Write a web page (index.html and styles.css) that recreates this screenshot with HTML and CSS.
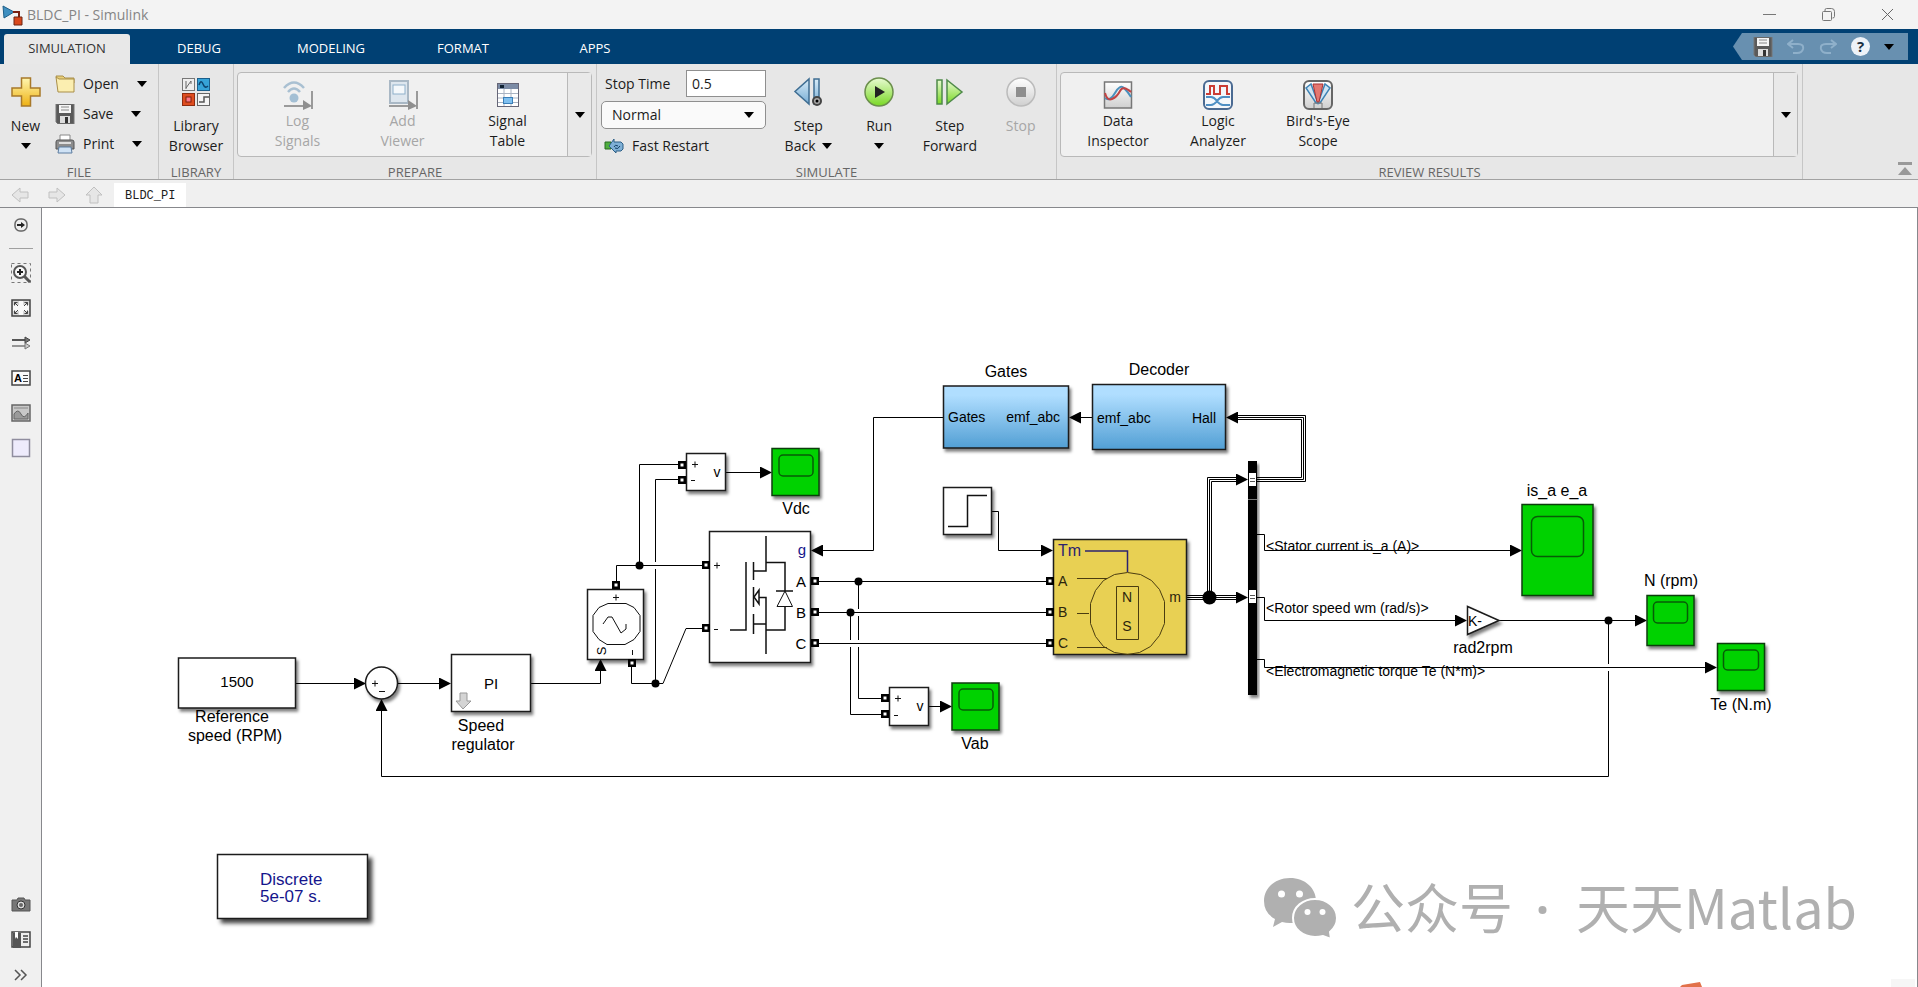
FILE: index.html
```html
<!DOCTYPE html>
<html lang="en">
<head>
<meta charset="utf-8">
<title>BLDC_PI - Simulink</title>
<link rel="stylesheet" href="styles.css">
</head>
<body>
<svg class="defs" aria-hidden="true">
  <defs>
    <linearGradient id="gold" x1="0" y1="0" x2="0" y2="1"><stop offset="0" stop-color="#fff6b0"/><stop offset="1" stop-color="#eeb112"/></linearGradient>
    <linearGradient id="green" x1="0" y1="0" x2="0" y2="1"><stop offset="0" stop-color="#e8fbd2"/><stop offset="1" stop-color="#79d824"/></linearGradient>
    <linearGradient id="blue" x1="0" y1="0" x2="0" y2="1"><stop offset="0" stop-color="#d8ecf8"/><stop offset="1" stop-color="#76acd4"/></linearGradient>
    <linearGradient id="silver" x1="0" y1="0" x2="0" y2="1"><stop offset="0" stop-color="#ffffff"/><stop offset="1" stop-color="#cfcfcf"/></linearGradient>
    <linearGradient id="sub" x1="0" y1="0" x2="0" y2="1"><stop offset="0.15" stop-color="#b0deff"/><stop offset="1" stop-color="#529fd4"/></linearGradient>
    <filter id="shadow" x="-20%" y="-20%" width="150%" height="150%"><feDropShadow dx="2" dy="3" stdDeviation="1.5" flood-opacity="0.5"/></filter>
    <filter id="deep" x="-20%" y="-20%" width="150%" height="150%"><feDropShadow dx="4" dy="4" stdDeviation="2" flood-opacity="0.75"/></filter>
    <marker id="arrow" viewBox="0 0 12 12" refX="0" refY="6" markerWidth="12" markerHeight="12" markerUnits="userSpaceOnUse" orient="auto"><path d="M0 0L12 6L0 12z"/></marker>
    <symbol id="port" viewBox="0 0 8 8"><path d="M0 0h8v8H0z"/><path d="M2.500 2.500h3v3h-3z" fill="#fff"/></symbol>
    <symbol id="caret" viewBox="0 0 10 6"><path d="M0 0h10L5 6z"/></symbol>
    <symbol id="disk" viewBox="0 0 20 20"><path d="M1 0h18v20H3l-2-2z" fill="#5a5a5a" stroke="#777"/><path d="M4 1h12v8H4z" fill="#f5f5f5"/><path d="M6 3h8M6 6h8" stroke="#888"/><path d="M5 12h10v7H5z" fill="#ddd"/><path d="M10 13h3v6h-3z" fill="#333"/></symbol>
  </defs>
</svg>

<header class="titlebar">
  <svg class="app-icon" width="22" height="22" viewBox="0 0 22 22"><path d="M1 2l11 6-10 6z" fill="#3f8fc0" stroke="#1f5f88"/><path d="M11 8h6v5" fill="none" stroke="#7a2010" stroke-width="2"/><path d="M12 13h8v8h-8z" fill="#d9481c" stroke="#6d2412"/></svg>
  <h1 class="title">BLDC_PI - Simulink</h1>
  <div class="window-buttons">
    <button aria-label="Minimize"><svg width="13" height="13"><path d="M0 6.500h13" stroke="#777"/></svg></button>
    <button aria-label="Restore"><svg width="13" height="13" fill="none" stroke="#777"><rect x="0.500" y="3.500" width="9" height="9" rx="1"/><path d="M3 3V2q0-1.500 1.500-1.500h5q3 0 3 3v5q0 1.500-2 1.500"/></svg></button>
    <button aria-label="Close"><svg width="13" height="13" stroke="#666"><path d="M1 1l11 11M12 1L1 12"/></svg></button>
  </div>
</header>

<nav class="tabs">
  <button class="tab active">SIMULATION</button>
  <button class="tab">DEBUG</button>
  <button class="tab">MODELING</button>
  <button class="tab">FORMAT</button>
  <button class="tab">APPS</button>
  <div class="quick">
    <button aria-label="Save model"><svg width="20" height="20"><use href="#disk"/></svg></button>
    <button aria-label="Undo"><svg width="18" height="16" fill="none" stroke="#8fb0ca" stroke-width="2"><path d="M6 1L1 5l5 4M1 5h10q6 0 5 5-1 4-6 4H6"/></svg></button>
    <button aria-label="Redo"><svg width="18" height="16" fill="none" stroke="#8fb0ca" stroke-width="2"><path d="M12 1l5 4-5 4M17 5H7q-6 0-5 5 1 4 6 4h4"/></svg></button>
    <button aria-label="Help" class="help">?</button>
    <button aria-label="More"><svg width="10" height="6"><use href="#caret"/></svg></button>
  </div>
</nav>

<div class="ribbon">
  <section class="group file">
    <div class="body">
      <button class="big"><svg class="i30" viewBox="0 0 30 30"><path d="M10.500 1h9v10H29v8h-9.500v10h-9V19H1v-8h9.500z" fill="url(#gold)" stroke="#a8792a" stroke-width="1.500"/></svg><span>New</span><svg class="caret" width="10" height="6"><use href="#caret"/></svg></button>
      <div class="stack">
        <button class="small"><svg width="20" height="20" viewBox="0 0 20 20"><path d="M1 2h7l2 2h9v5H3z" fill="#e9cf78" stroke="#a98f4a"/><path d="M4 5h15v13H3L1 3z" fill="#fbeeb0" stroke="#a98f4a"/></svg><span>Open</span><svg width="10" height="6"><use href="#caret"/></svg></button>
        <button class="small"><svg width="20" height="20"><use href="#disk"/></svg><span>Save</span><svg width="10" height="6"><use href="#caret"/></svg></button>
        <button class="small"><svg width="20" height="20" viewBox="0 0 20 20"><path d="M5 1h10v8H5z" fill="#fff" stroke="#888"/><path d="M1 8q0-2 2-2h14q2 0 2 2v7H1z" fill="#8d8d8d" stroke="#555"/><path d="M4 8h12v2H4z" fill="#ddd"/><path d="M4 13h12l1 6H3z" fill="#cfe2f5" stroke="#5d7da0"/></svg><span>Print</span><svg width="10" height="6"><use href="#caret"/></svg></button>
      </div>
    </div>
    <h2>FILE</h2>
  </section>
  <section class="group library">
    <div class="body">
      <button class="big"><svg class="i30" viewBox="0 0 30 30"><rect x="1.500" y="1.500" width="12" height="12" fill="#eee" stroke="#777"/><path d="M5 4v8M5 11l5-7M10 4v3" fill="none" stroke="#666"/><rect x="16.500" y="1.500" width="12" height="12" fill="#36a3d8" stroke="#1b5f8c"/><path d="M18 8q2-6 4-1t5 2" fill="none" stroke="#0d4570" stroke-width="1.500"/><rect x="1.500" y="16.500" width="12" height="12" fill="#df4d20" stroke="#8d2c10"/><rect x="5" y="20" width="5" height="5" fill="#f78" stroke="#7b200c"/><rect x="16.500" y="16.500" width="12" height="12" fill="#f4f4f4" stroke="#666"/><path d="M18 25h5v-5h5" fill="none" stroke="#555" stroke-width="1.500"/></svg><span>Library<br>Browser</span></button>
    </div>
    <h2>LIBRARY</h2>
  </section>
  <section class="group prepare">
    <div class="body">
      <div class="gallery">
        <button class="item" disabled><svg class="i30" viewBox="0 0 30 30" fill="none"><path d="M1 8Q11-3 21 8M5 12q6-7 12 0" stroke="#a9c0d2" stroke-width="2.500"/><circle cx="11" cy="18" r="4.500" fill="#a3bfd4"/><path d="M1 26h20M29 11v18" stroke="#9a9a9a" stroke-width="2"/><path d="M20 20l9 6-9 4z" fill="#8f8f8f"/></svg><span>Log<br>Signals</span></button>
        <button class="item" disabled><svg class="i30" viewBox="0 0 30 30" fill="none"><rect x="2" y="1" width="18" height="22" fill="#dde6ee" stroke="#a9b8c5" stroke-width="2"/><rect x="5" y="5" width="12" height="9" fill="#f4f8fb" stroke="#8fb0ca"/><path d="M1 26h20M29 11v18" stroke="#9a9a9a" stroke-width="2"/><path d="M20 20l9 6-9 4z" fill="#8f8f8f"/></svg><span>Add<br>Viewer</span></button>
        <button class="item"><svg class="i30" viewBox="0 0 30 30"><rect x="4.500" y="3.500" width="21" height="23" fill="#fff" stroke="#667"/><path d="M5 4h20v5H5z" fill="#7c8ca6"/><path d="M7 5h4v3H7z" fill="#123"/><path d="M5 13.500h20M5 18h20M5 22.500h20M11 9v17M18 9v17" stroke="#a9b3c2"/><rect x="10.500" y="17.500" width="9" height="6" fill="#7fc0f0" stroke="#3b7fb8"/></svg><span>Signal<br>Table</span></button>
        <button class="more" aria-label="More tools"><svg width="10" height="6"><use href="#caret"/></svg></button>
      </div>
    </div>
    <h2>PREPARE</h2>
  </section>
  <section class="group simulate">
    <div class="body">
      <div class="settings">
        <div class="stop"><label for="stop">Stop Time</label><input id="stop" type="text" value="0.5"></div>
        <div class="mode"><select aria-label="Simulation mode"><option>Normal</option></select><svg class="mode-caret" width="10" height="6"><use href="#caret"/></svg></div>
        <button class="fast"><svg width="20" height="16" viewBox="0 0 20 16"><path d="M1 4h6v7H1z" fill="#4fae3e" stroke="#276a22"/><path d="M5 8l5-7v3h7l2 2v5l-2 2h-5v2z" fill="#7fb0d6" stroke="#2d5f86"/><path d="M10 9q1-3 4-1M11 10q3 2 5-2" fill="none" stroke="#123f63"/></svg><span>Fast Restart</span></button>
      </div>
      <button class="big run"><svg class="i30" viewBox="0 0 30 30"><path d="M16 2v25L2 14.500z" fill="url(#blue)" stroke="#3f6e93" stroke-width="1.500"/><path d="M21 2h5v25h-5z" fill="url(#blue)" stroke="#3f6e93" stroke-width="1.500"/><circle cx="24" cy="24" r="4" fill="#aaa" stroke="#444" stroke-width="2"/><circle cx="24" cy="24" r="1.500"/></svg><span>Step<br>Back <svg class="inline-caret" width="10" height="6"><use href="#caret"/></svg></span></button>
      <button class="big run"><svg class="i30" viewBox="0 0 30 30"><circle cx="15" cy="15" r="14" fill="url(#green)" stroke="#6b8f4c" stroke-width="1.500"/><path d="M11 9l10 6-10 6z" fill="#222"/></svg><span>Run</span><svg class="caret" width="10" height="6"><use href="#caret"/></svg></button>
      <button class="big run"><svg class="i30" viewBox="0 0 30 30" fill="url(#green)" stroke="#4f8a4a" stroke-width="1.500"><path d="M2 3h5v24H2zM12 3v24l15-12z"/></svg><span>Step<br>Forward</span></button>
      <button class="big run" disabled><svg class="i30" viewBox="0 0 30 30"><circle cx="15" cy="15" r="14" fill="url(#silver)" stroke="#bbb" stroke-width="1.500"/><path d="M10 10h10v10H10z" fill="#8e8e8e"/></svg><span>Stop</span></button>
    </div>
    <h2>SIMULATE</h2>
  </section>
  <section class="group review">
    <div class="body">
      <div class="gallery">
        <button class="item"><svg class="i30" viewBox="0 0 30 30" fill="none"><rect x="1.500" y="2" width="27" height="26" fill="url(#silver)" stroke="#777" stroke-width="1.500"/><path d="M2 18q5 4 10-5t9-5 7 9" stroke="#4a90bd" stroke-width="2"/><path d="M2 13q2 8 7 6t8-8 11 1" stroke="#c24444" stroke-width="2"/></svg><span>Data<br>Inspector</span></button>
        <button class="item"><svg class="i30" viewBox="0 0 30 30" fill="none"><rect x="1" y="1" width="28" height="28" rx="5" fill="#f4f7fb" stroke="#4a6a92" stroke-width="2"/><path d="M3 14h4V6h4v8h6V6h7v8h3" stroke="#cb3d35" stroke-width="2"/><path d="M3 17h5q3 0 6 4t6 4h7M3 25h5q3 0 6-4t6-4h7" stroke="#4e8fc4" stroke-width="2"/></svg><span>Logic<br>Analyzer</span></button>
        <button class="item"><svg class="i30" viewBox="0 0 30 30"><rect x="1" y="1" width="28" height="28" rx="5" fill="url(#silver)" stroke="#666" stroke-width="2"/><path d="M3 8l5-4 7 19 7-19 5 4-10 15h-4z" fill="#cfe4f3" stroke="#3d82b4" stroke-width="1.500"/><path d="M10 4h10l-4 18h-2z" fill="#e47770" stroke="#a33"/><path d="M11 28v-5h8v5" fill="none" stroke="#777"/></svg><span>Bird's-Eye<br>Scope</span></button>
        <button class="more" aria-label="More results"><svg width="10" height="6"><use href="#caret"/></svg></button>
      </div>
    </div>
    <h2>REVIEW RESULTS</h2>
  </section>
  <button class="collapse" aria-label="Collapse toolstrip"><svg width="14" height="14" fill="#999"><path d="M0 0h14v3H0zM7 5l7 8H0z"/></svg></button>
</div>

<div class="pathbar">
  <button aria-label="Back"><svg width="18" height="16" fill="#e6e6e6" stroke="#c0c0c0"><path d="M1 8l8-7v4h8v6H9v4z"/></svg></button>
  <button aria-label="Forward"><svg width="18" height="16" fill="#e6e6e6" stroke="#c0c0c0"><path d="M17 8L9 1v4H1v6h8v4z"/></svg></button>
  <button aria-label="Up"><svg width="18" height="18" fill="#e6e6e6" stroke="#c0c0c0"><path d="M9 1l8 8h-4v8H5V9H1z"/></svg></button>
  <button class="model-tab">BLDC_PI</button>
</div>

<main class="editor">
  <aside class="palette">
    <button aria-label="Hide browser"><svg width="20" height="20"><rect x="4" y="4" width="12" height="12" rx="5" fill="#eee" stroke="#666" stroke-width="1.500"/><path d="M6 9h4V7l4 3-4 3v-2H6z" fill="#222"/></svg></button>
    <hr>
    <button aria-label="Zoom"><svg width="20" height="20" fill="none"><rect x="0.500" y="0.500" width="19" height="19" stroke="#777" stroke-dasharray="3 3"/><circle cx="9" cy="9" r="6" fill="#f8f8f8" stroke="#555" stroke-width="2"/><path d="M9 6v6M6 9h6" stroke="#222" stroke-width="2"/><path d="M13 13l6 6" stroke="#555" stroke-width="3"/></svg></button>
    <button aria-label="Fit to view"><svg width="20" height="20" fill="none" stroke="#444"><rect x="1" y="2" width="18" height="16" fill="#d8d8d8" stroke-width="1.500"/><path d="M8 3h4v4h6v6h-6v4H8v-4H2V7h6z" fill="#fafafa" stroke="none"/><path d="M7 8L3.500 4.500M3.500 7.500v-3h3M13 8l3.500-3.500M13.500 4.500h3v3M7 12l-3.500 3.500M3.500 12.500v3h3M13 12l3.500 3.500M16.500 12.500v3h-3"/></svg></button>
    <button aria-label="Sample time"><svg width="20" height="20" fill="none"><path d="M1 7h16" stroke="#222" stroke-width="1.500"/><path d="M14 4l5 3-5 3z" fill="#777" stroke="#444"/><path d="M1 13h16" stroke="#777" stroke-width="1.500"/><path d="M14 10l5 3-5 3z" fill="#ccc" stroke="#777"/></svg></button>
    <button aria-label="Annotation"><svg width="20" height="20"><rect x="1" y="3" width="18" height="14" fill="#fafafa" stroke="#444" stroke-width="1.500"/><text class="glyph" x="3" y="14">A</text><path d="M12 7.500h5M12 10.500h5M12 13.500h5" stroke="#444"/></svg></button>
    <button aria-label="Image"><svg width="20" height="20"><rect x="1" y="2" width="18" height="16" fill="#c8c8c8" stroke="#666" stroke-width="1.500"/><path d="M3 5h14" stroke="#888"/><path d="M3 16v-5q4-6 7 0t7-1v6z" fill="#9a9a9a" stroke="#666"/></svg></button>
    <button aria-label="Area"><svg width="20" height="20"><rect x="1.500" y="1.500" width="17" height="17" fill="#eeebfc" stroke="#8f8d9e" stroke-width="1.500"/></svg></button>
    <div class="spacer"></div>
    <button aria-label="Screenshot"><svg width="20" height="20"><path d="M1 5h5l1-2h6l1 2h5v11H1z" fill="#777" stroke="#555"/><circle cx="10" cy="10" r="4" fill="#ddd" stroke="#333"/><circle cx="10" cy="10" r="2" fill="#666"/></svg></button>
    <button aria-label="Model browser"><svg width="20" height="20"><path d="M1 2h18v15H1z" fill="#eee" stroke="#444" stroke-width="1.500"/><path d="M2 3h8v15H2z" fill="#555"/><path d="M4 2h3v7L5 7 4 9z" fill="#fff"/><path d="M12 6h5M12 9h5M12 12h5" stroke="#444" stroke-width="1.500"/></svg></button>
    <button aria-label="More"><svg width="20" height="20" fill="none" stroke="#555" stroke-width="1.500"><path d="M4 5l5 5-5 5M10 5l5 5-5 5"/></svg></button>
  </aside>

  <svg class="canvas" role="img" aria-label="BLDC_PI model">
    <g transform="translate(-42 -208)">
      <!-- signal lines -->
      <g class="wire">
        <path class="to" d="M296 683.500H354"/>
        <path class="to" d="M397 683.500H439"/>
        <path class="to" d="M531 683.500H600.500V671"/>
        <path class="to" d="M1608.500 620.500V776.500H381.500V711"/>
        <path class="to" d="M725 472.500H760"/>
        <path class="to" d="M943 417.500H873.500V550.500H823"/>
        <path class="to" d="M928 706.500H940"/>
        <path class="to" d="M1092 417.500H1081"/>
        <path class="to" d="M991 511.500H998.500V550.500H1041"/>
        <path class="to" d="M1257 534.500H1264.500V550.500H1510"/>
        <path class="to" d="M1257 597.500H1264.500V620.500H1455"/>
        <path class="to" d="M1499 620.500H1635"/>
        <path d="M639.500 565.500V464.500H680"/>
        <path d="M655.500 683.500V479.500H680"/>
        <path d="M858.500 581.500V698.500H882M850.500 612.500V714.500H882"/>
        <path d="M631.500 666V683.500H663L686 628.500H703"/>
      </g>
      <path class="gap" d="M655.500 562v7M858.500 609v7M858.500 640v7M850.500 640v7M1608.500 664v7"/>
      <g class="wire">
        <path d="M616.500 583V565.500H703"/>
        <path d="M819 581.500H1047M819 612.500H1047M819 643.500H1047"/>
        <path class="to" d="M1257 659.500H1264.500V667.500H1705"/>
      </g>
      <!-- bus lines -->
      <g class="wire">
        <path d="M1187 595.500H1236M1187 599.500H1236"/><path class="to" d="M1187 597.500H1236"/>
        <path d="M1207.500 597V477.500H1236M1211.500 597V481.500H1236"/><path class="to" d="M1209.500 597V479.500H1236"/>
        <path d="M1257 477.500H1301.500V419.500H1238M1257 481.500H1305.500V415.500H1238"/><path class="to" d="M1257 479.500H1303.500V417.500H1238"/>
      </g>
      <g>
        <circle cx="639.500" cy="565.500" r="4"/><circle cx="655.500" cy="683.500" r="4"/><circle cx="858.500" cy="581.500" r="4"/><circle cx="850.500" cy="612.500" r="4"/><circle cx="1608.500" cy="620.500" r="4"/><circle cx="1209.500" cy="597.500" r="7"/>
      </g>

      <!-- reference, sum, regulator -->
      <rect class="block" x="178.500" y="658" width="117" height="50"/>
      <text class="t15 mid" x="237" y="687">1500</text>
      <text class="t16 mid" x="232" y="722">Reference</text>
      <text class="t16 mid" x="235" y="741">speed (RPM)</text>
      <circle class="block" cx="381.500" cy="683" r="16"/>
      <path class="ink" d="M372 683.500h6M375 680.500v6M379 691.500h6"/>
      <rect class="block" x="451.500" y="654.500" width="79" height="57"/>
      <text class="t15 mid" x="491" y="689">PI</text>
      <path d="M460 693h7v8h4l-8 8-7-8h4z" fill="#d4d4d4" stroke="#999"/>
      <text class="t16 mid" x="481" y="731">Speed</text>
      <text class="t16 mid" x="483" y="750">regulator</text>

      <!-- controlled source -->
      <rect class="block" x="587.500" y="589.500" width="56" height="70"/>
      <path class="ink" d="M608 603.500h18l8 4 6 8v16l-6 8-9 5h-18l-8-5-6-8v-16l6-8z"/>
      <path class="ink" d="M603 624l5-7h4l9 16 5-4v-5"/>
      <path class="ink" d="M613 597.500h6M616 594.500v6M632.500 650v5"/>
      <text class="t13 mid" transform="translate(606 651) rotate(-90)">S</text>
      <use href="#port" x="612" y="581" width="8" height="8"/>
      <use href="#port" x="628" y="659" width="8" height="8"/>

      <!-- Vdc measurement -->
      <rect class="block" x="686.500" y="453.500" width="39" height="37"/>
      <path class="ink" d="M692 464.500h6M695 461.500v6M691 480.500h4"/>
      <text class="t14 mid" x="717" y="477">v</text>
      <use href="#port" x="678" y="461" width="8" height="8"/>
      <use href="#port" x="678" y="476" width="8" height="8"/>
      <rect class="block scope" x="772" y="448.500" width="47" height="47"/>
      <rect class="screen" x="779" y="455" width="34" height="21" rx="4"/>
      <text class="t16 mid" x="796" y="514">Vdc</text>

      <!-- inverter -->
      <rect class="block" x="709.500" y="531.500" width="101" height="131"/>
      <path class="ink thick" d="M766 536V571H753.500M766 562.500H785V630H766M730 630H746V562M753.500 562V580M753.500 587V607M753.500 614V634M759 597.500H766V654M753.500 624H766M776 591H793"/>
      <path class="ink white" d="M785 591L777 606.500H792.500z"/>
      <path class="ink thick white" d="M754 597L759 590V604z"/>
      <path class="ink" d="M714 565.500h6M717 562.500v6M714 629.500h4"/>
      <text class="t15 mid navy" x="802" y="555">g</text>
      <text class="t15 mid" x="801" y="587">A</text>
      <text class="t15 mid" x="801" y="618">B</text>
      <text class="t15 mid" x="801" y="649">C</text>
      <use href="#port" x="702" y="561" width="8" height="8"/>
      <use href="#port" x="702" y="624" width="8" height="8"/>
      <use href="#port" x="811" y="577" width="8" height="8"/>
      <use href="#port" x="811" y="608" width="8" height="8"/>
      <use href="#port" x="811" y="639" width="8" height="8"/>

      <!-- Vab measurement -->
      <rect class="block" x="889.500" y="687.500" width="39" height="38"/>
      <path class="ink" d="M895 698.500h6M898 695.500v6M894 715.500h4"/>
      <text class="t14 mid" x="920" y="711">v</text>
      <use href="#port" x="881" y="694" width="8" height="8"/>
      <use href="#port" x="881" y="710" width="8" height="8"/>
      <rect class="block scope" x="952" y="683" width="47" height="47"/>
      <rect class="screen" x="959" y="689" width="34" height="21" rx="4"/>
      <text class="t16 mid" x="975" y="749">Vab</text>

      <!-- commutation subsystems -->
      <rect class="block subsystem" x="943.500" y="386" width="125" height="62"/>
      <text class="t14" x="948" y="422">Gates</text>
      <text class="t14 end" x="1060" y="422">emf_abc</text>
      <text class="t16 mid" x="1006" y="377">Gates</text>
      <rect class="block subsystem" x="1092.500" y="384.500" width="133" height="65"/>
      <text class="t14" x="1097" y="423">emf_abc</text>
      <text class="t14 end" x="1216" y="423">Hall</text>
      <text class="t16 mid" x="1159" y="375">Decoder</text>

      <!-- load step and machine -->
      <rect class="block" x="943.500" y="487.500" width="48" height="47"/>
      <path class="ink thick" d="M948 526.500H967.500V495.500H987"/>
      <rect class="block motor" x="1053.500" y="539.500" width="133" height="115"/>
      <text class="t16 dusk" x="1058" y="556">Tm</text>
      <path d="M1085 551H1127.500V572" fill="none" stroke="#2b2370" stroke-width="1.500"/>
      <path class="ink olive" d="M1127.500 572.500l13 2 11 6 8 9 5 12v22l-5 12-9 11-11 6-12 2-13-2-11-6-8-10-5-13v-20l5-13 8-10 11-6zM1077 578.500h30M1077 613.500h12M1077 647.500h30M1116.500 586.500h22v53h-22z"/>
      <text class="t14 mid dark" x="1127" y="602">N</text>
      <text class="t14 mid dark" x="1127" y="631">S</text>
      <text class="t14 dark" x="1058" y="586">A</text>
      <text class="t14 dark" x="1058" y="617">B</text>
      <text class="t14 dark" x="1058" y="648">C</text>
      <text class="t14 mid dark" x="1175" y="602">m</text>
      <use href="#port" x="1046" y="577" width="8" height="8"/>
      <use href="#port" x="1046" y="608" width="8" height="8"/>
      <use href="#port" x="1046" y="639" width="8" height="8"/>

      <!-- bus selector -->
      <rect class="bus" x="1248" y="461" width="9" height="234"/>
      <path d="M1248 499.500h9" stroke="#777"/>
      <path d="M1249 473h7v13h-7zM1249 590h7v13h-7z" fill="#fff"/>
      <path d="M1250 478.500h5M1250 481.500h5M1250 595.500h5M1250 598.500h5" stroke="#555"/>
      <text class="t14" x="1266" y="551">&lt;Stator current is_a (A)&gt;</text>
      <text class="t14" x="1266" y="613">&lt;Rotor speed wm (rad/s)&gt;</text>
      <text class="t14" x="1266" y="676">&lt;Electromagnetic torque Te (N*m)&gt;</text>

      <!-- outputs -->
      <path class="block" d="M1467.500 606.500V634.500L1499 620.500z"/>
      <text class="t14" x="1468" y="626">K-</text>
      <text class="t16 mid" x="1483" y="653">rad2rpm</text>
      <rect class="block scope" x="1522" y="504.500" width="71" height="91"/>
      <rect class="screen" x="1531.500" y="516.500" width="52" height="40" rx="6"/>
      <text class="t16 mid" x="1557" y="496">is_a e_a</text>
      <rect class="block scope" x="1647" y="595.500" width="47" height="50"/>
      <rect class="screen" x="1653.500" y="602" width="34" height="21" rx="4"/>
      <text class="t16 mid" x="1671" y="586">N (rpm)</text>
      <rect class="block scope" x="1717.500" y="643.500" width="47" height="47"/>
      <rect class="screen" x="1723.500" y="650" width="35" height="20" rx="4"/>
      <text class="t16 mid" x="1741" y="710">Te (N.m)</text>

      <!-- powergui -->
      <rect class="block raised" x="217.500" y="854.500" width="150" height="64"/>
      <text class="t17 navy" x="260" y="885">Discrete</text>
      <text class="t17 navy" x="260" y="902">5e-07 s.</text>

      <!-- watermark -->
      <g fill="#b0b0b0">
        <path d="M1290 878c15 0 26 10 26 23s-11 22-26 22q-4 0-8-1l-9 5 2-8q-11-6-11-18c0-13 11-23 26-23z"/>
        <path d="M1315 899c12 0 22 8 22 19q0 8-7 14l1 7-8-3q-4 1-8 1c-12 0-22-8-22-19s10-19 22-19z" stroke="#fff" stroke-width="2"/>
        <g fill="#fff"><circle cx="1281.500" cy="894" r="3.500"/><circle cx="1299.500" cy="894" r="3.500"/><circle cx="1307.500" cy="912" r="3"/><circle cx="1322.500" cy="912" r="3"/></g>
        <text class="mark" x="1351" y="929">公众号</text>
        <circle cx="1542.500" cy="910" r="4"/>
        <text class="mark" x="1576" y="929">天天Matlab</text>
      </g>
      <path d="M1680 987l2-2 18-3 2 5z" fill="#e2714a"/>
      <path d="M1891 979h24v8h-24z" fill="#f6f6f6"/>
    </g>
  </svg>
</main>
</body>
</html>
```
FILE: styles.css
```css
* { box-sizing: border-box; }

body {
  margin: 0;
  height: 100vh;
  display: flex;
  flex-direction: column;
  overflow: hidden;
  background: #f0f0f0;
  color: #1c1c1c;
  font: 14px/20px "Open Sans", "Noto Sans", sans-serif;
}

button {
  padding: 0;
  border: 0;
  background: none;
  color: inherit;
  font: inherit;
}

button:disabled { color: #a6a6a6; }
svg { display: block; flex: none; }
.defs { position: absolute; width: 0; height: 0; }

.titlebar {
  display: flex;
  align-items: center;
  height: 29px;
  padding: 0 24px 0 2px;
  gap: 3px;
  background: #f3f3f3;
}
.title { margin: 0; color: #858585; font-size: 14px; font-weight: 400; }
.window-buttons { display: flex; gap: 46px; margin-left: auto; }

.tabs {
  display: flex;
  align-items: flex-end;
  gap: 6px;
  height: 35px;
  padding-left: 4px;
  background: #004073;
}
.tab {
  width: 126px;
  height: 30px;
  padding-bottom: 2px;
  border-radius: 3px 3px 0 0;
  color: #fff;
  font-size: 13px;
}
.tab.active { background: #e8e8e8; color: #333; }
.quick {
  display: flex;
  align-items: center;
  gap: 14px;
  height: 27px;
  margin: 0 10px 4px auto;
  padding: 0 14px 0 20px;
  background: #6890b0;
  clip-path: polygon(9px 0, 100% 0, 100% 100%, 9px 100%, 0 50%);
}
.help {
  width: 19px;
  height: 19px;
  border-radius: 50%;
  background: #eef3f8;
  color: #1c3042;
  font-size: 15px;
  font-weight: 700;
  line-height: 19px;
}

.ribbon {
  display: flex;
  height: 116px;
  border-bottom: 1px solid #a2a2a2;
  background: #e7e7e7;
}
.group {
  display: flex;
  flex-direction: column;
  border-right: 1px solid #c6c6c6;
}
.group h2 {
  margin: 0;
  color: #666;
  font-size: 13px;
  font-weight: 400;
  line-height: 20px;
  text-align: center;
}
.body { display: flex; height: 98px; }
.body { flex: none; }
.group h2 { height: 17px; }
.file { width: 159px; }
.library { width: 75px; }
.prepare { width: 363px; }
.simulate { width: 460px; }
.review { flex: 1; }
.i30 { width: 30px; height: 30px; }

.big {
  display: flex;
  flex-direction: column;
  align-items: center;
  padding-top: 13px;
}
.big span { margin-top: 9px; }
.big .caret { margin-top: 7px; }
.file .big { width: 51px; }
.library .big { width: 100%; }
.simulate .run { flex: 1; }
.inline-caret { display: inline-block; margin: 0 0 2px 3px; }

.stack { display: flex; flex-direction: column; padding: 5px 0 0 4px; }
.small { display: flex; align-items: center; height: 30px; gap: 8px; }
.small svg:last-child { margin-left: 10px; }

.gallery {
  display: flex;
  flex: 1;
  height: 85px;
  margin: 8px 4px 0 3px;
  padding-left: 7px;
  border: 1px solid #b9b9b9;
  border-radius: 4px;
  background: #f0f0f0;
}
.item {
  display: flex;
  flex-direction: column;
  align-items: center;
  width: 105px;
  padding-top: 7px;
}
.review .item { width: 100px; }
.item span { margin-top: 1px; }
.more {
  display: grid;
  place-items: center;
  width: 24px;
  margin-left: auto;
  border-left: 1px solid #b9b9b9;
  background: #e9e9e9;
}

.settings {
  display: flex;
  flex: none;
  flex-direction: column;
  width: 169px;
  margin-right: 7px;
  padding: 6px 0 0 4px;
  gap: 4px;
}
.stop { display: flex; align-items: center; justify-content: space-between; padding-left: 4px; }
.stop input {
  width: 80px;
  height: 27px;
  padding: 0 5px;
  border: 1px solid #8f8f8f;
  background: #fff;
  color: inherit;
  font: inherit;
}
.mode { position: relative; }
.mode select {
  width: 100%;
  height: 28px;
  padding: 0 10px;
  border: 1px solid #8f8f8f;
  border-radius: 5px;
  background: #fafafa;
  color: inherit;
  font: inherit;
  appearance: none;
}
.mode-caret { position: absolute; right: 12px; top: 11px; pointer-events: none; }
.fast { display: flex; align-items: center; height: 26px; padding-left: 3px; gap: 8px; }

.collapse { display: flex; align-items: flex-end; justify-content: flex-end; width: 115px; padding: 0 6px 3px; }

.pathbar {
  display: flex;
  align-items: center;
  height: 27px;
  padding: 2px 0 0 11px;
  gap: 19px;
}
.model-tab {
  align-self: flex-end;
  height: 24px;
  margin-left: -8px;
  padding: 1px 11px 0;
  background: #fff;
  font: 12px "Liberation Mono", monospace;
}

.editor { display: flex; flex: 1; min-height: 0; border-top: 1px solid #87888c; }
.palette {
  display: flex;
  flex-direction: column;
  align-items: center;
  width: 41px;
  padding: 7px 0 2px;
  gap: 15px;
}
.palette hr { width: 24px; height: 1px; margin: -2px 0 -1px; border: 0; background: #a0a0a0; }
.spacer { flex: 1; }
.glyph { font: 700 11px "Liberation Sans", sans-serif; }

.canvas {
  flex: 1;
  min-width: 0;
  height: 100%;
  overflow: hidden;
  border: solid #87888c;
  border-width: 0 1px;
  background: #fff;
  font-family: "Liberation Sans", Arial, sans-serif;
}
.wire path { fill: none; stroke: #000; }
.wire .to { marker-end: url(#arrow); }
.gap { stroke: #fff; stroke-width: 3; }
.block { fill: #fff; stroke: #1a1a1a; stroke-width: 1.5; filter: url(#shadow); }
.scope { fill: #00d200; stroke: #0b3d0b; }
.screen { fill: none; stroke: #075c07; stroke-width: 1.5; }
.subsystem { fill: url(#sub); }
.motor { fill: #e8d052; }
.raised { filter: url(#deep); }
.bus { filter: url(#shadow); }
.ink { fill: none; stroke: #111; }
.thick { stroke-width: 1.5; }
.white { fill: #fff; }
.olive { stroke: #4a3c10; }
.t13 { font-size: 13px; }
.t14 { font-size: 14px; }
.t15 { font-size: 15px; }
.t16 { font-size: 16px; }
.t17 { font-size: 17px; }
.mid { text-anchor: middle; }
.end { text-anchor: end; }
.navy { fill: #15158c; }
.dusk { fill: #2b2370; }
.dark { fill: #2c250c; }
.mark { font: 54px "Noto Sans CJK SC", sans-serif; }
```
